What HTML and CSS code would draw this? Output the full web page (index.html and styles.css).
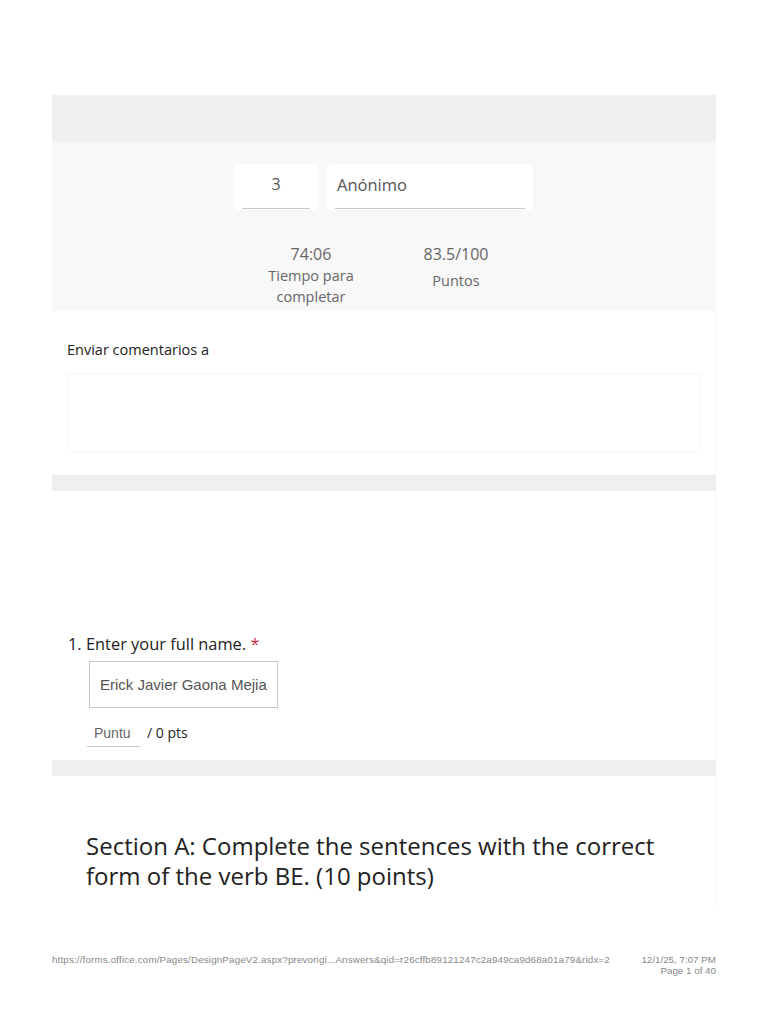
FILE: index.html
```html
<!DOCTYPE html>
<html lang="es">
<head>
<meta charset="utf-8">
<title>Forms</title>
<link rel="stylesheet" href="styles.css">
</head>
<body>
<div class="page">
  <div class="top-band"></div>
  <div class="summary">
    <div class="id-row">
      <div class="box box-num"><span class="box-text">3</span></div>
      <div class="box box-name"><span class="box-text">Anónimo</span></div>
    </div>
    <div class="stats">
      <div class="stat stat-time">
        <div class="stat-value">74:06</div>
        <div class="stat-label">Tiempo para completar</div>
      </div>
      <div class="stat stat-points">
        <div class="stat-value">83.5/100</div>
        <div class="stat-label stat-label-pts">Puntos</div>
      </div>
    </div>
  </div>
  <div class="feedback">
    <div class="feedback-label">Enviar comentarios a</div>
    <div class="feedback-area"></div>
  </div>
  <div class="sep"></div>
  <div class="question">
    <div class="q-title">1. Enter your full name. <span class="req">*</span></div>
    <div class="answer">Erick Javier Gaona Mejia</div>
    <div class="score-row">
      <span class="score-input">Puntu</span>
      <span class="score-total">/ 0 pts</span>
    </div>
  </div>
  <div class="sep"></div>
  <div class="section">
    <div class="section-title">Section A: Complete the sentences with the correct form of the verb BE. (10 points)</div>
  </div>
</div>
<div class="footer">
  <div class="footer-url">https://forms.office.com/Pages/DesignPageV2.aspx?prevorigi...Answers&amp;qid=r26cffb89121247c2a949ca9d68a01a79&amp;ridx=2</div>
  <div class="footer-right">
    <div>12/1/25, 7:07 PM</div>
    <div>Page 1 of 40</div>
  </div>
</div>
</body>
</html>
```

FILE: styles.css
```css
* { box-sizing: border-box; }
body {
  margin: 0;
  background: #ffffff;
  font-family: "Open Sans", "Noto Sans", sans-serif;
  color: #222;
}
.page {
  width: 664px;
  margin-left: 52px;
  padding-top: 95px;
}
.top-band {
  height: 47px;
  background: #f0f0f0;
}
.summary {
  height: 169px;
  background: #f8f8f8;
  padding-top: 22px;
}
.id-row {
  display: flex;
  gap: 9px;
  margin-left: 182px;
}
.box {
  height: 46px;
  background: #fff;
  border-radius: 4px;
  position: relative;
  padding-top: 9px;
}
.box::after {
  content: "";
  position: absolute;
  left: 8px;
  right: 8px;
  bottom: 1px;
  height: 1px;
  background: #c8c8c8;
}
.box-num { width: 84px; text-align: center; }
.box-name { width: 206px; padding-left: 10px; }
.box-text {
  font-size: 16px;
  color: #555;
}
.box-name .box-text { font-size: 16.5px; }
.stats {
  display: flex;
  margin-top: 33px;
  margin-left: 199px;
  gap: 25px;
}
.stat {
  width: 120px;
  text-align: center;
  color: #666;
}
.stat-value {
  font-size: 16px;
  line-height: 22px;
}
.stat-label {
  font-size: 14.5px;
  line-height: 21px;
  color: #666;
}
.stat-label-pts { margin-top: 5px; }
.feedback {
  height: 164px;
  background: #fff;
  padding: 29px 16px 0 15px;
  border-right: 1px solid #f6f6f6;
}
.feedback-label {
  font-size: 14.5px;
  line-height: 20px;
  color: #222;
}
.feedback-area {
  margin-top: 13px;
  height: 79px;
  border: 1px solid #f5f5f5;
  border-radius: 2px;
  width: 634px;
}
.sep {
  height: 16px;
  background: #efefef;
}
.question {
  height: 269px;
  padding: 141px 0 0 16px;
  border-right: 1px solid #f6f6f6;
}
.q-title {
  font-size: 16.4px;
  line-height: 24px;
  color: #222;
}
.req { color: #c4314b; }
.answer {
  margin: 5px 0 0 21px;
  width: 189px;
  height: 47px;
  border: 1px solid #c8c8c8;
  font-family: "Liberation Sans", Arial, sans-serif;
  font-size: 15px;
  color: #555;
  padding: 14px 0 0 10px;
  white-space: nowrap;
}
.score-row {
  display: flex;
  align-items: baseline;
  margin: 15px 0 0 19px;
}
.score-input {
  display: inline-block;
  width: 53px;
  padding: 0 0 5px 7px;
  border-bottom: 1px solid #c8c8c8;
  font-family: "Liberation Sans", Arial, sans-serif;
  font-size: 14px;
  color: #666;
}
.score-total {
  margin-left: 7px;
  font-size: 14px;
  color: #222;
}
.section {
  height: 130px;
  padding: 55px 30px 0 34px;
  border-right: 1px solid #f6f6f6;
}
.section-title {
  font-size: 24px;
  line-height: 30px;
  color: #222;
}
.footer {
  display: flex;
  justify-content: space-between;
  width: 664px;
  margin: 48px 0 0 52px;
  font-family: "Liberation Sans", Arial, sans-serif;
  font-size: 9.8px;
  line-height: 11px;
  color: #888;
}
.footer-url { letter-spacing: 0.15px; }
.footer-right { text-align: right; }
```
